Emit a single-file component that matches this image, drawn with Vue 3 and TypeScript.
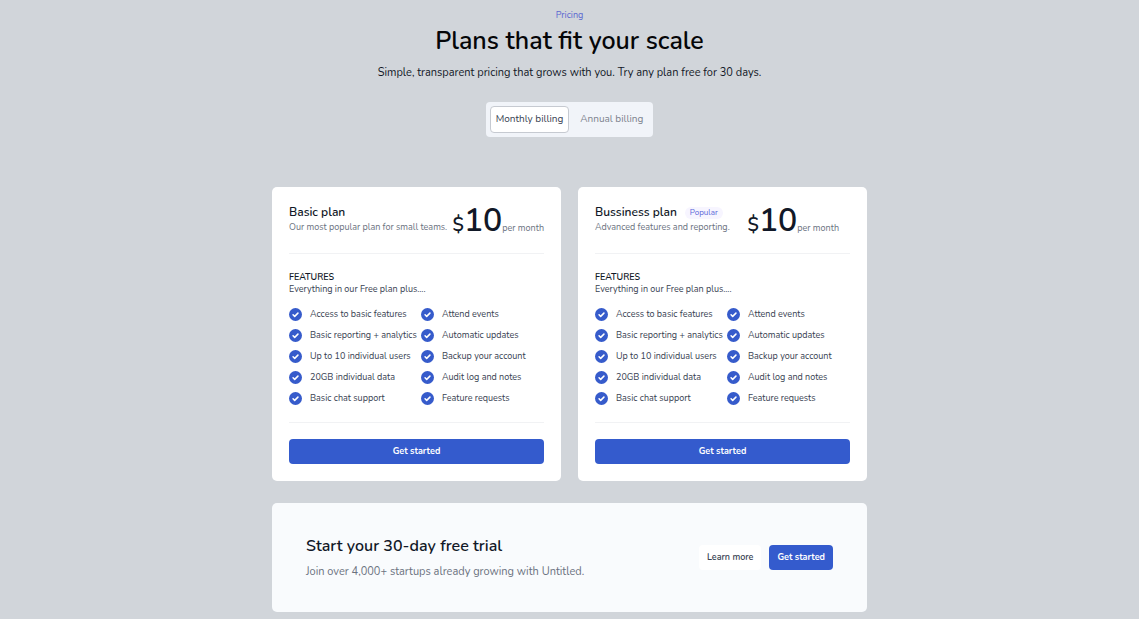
<script setup lang="ts">
import { ref } from 'vue'

type Billing = 'monthly' | 'annual'

interface Plan {
  name: string
  description: string
  price: number
  popular: boolean
}

const billing = ref<Billing>('monthly')

const billingOptions: { id: Billing; label: string }[] = [
  { id: 'monthly', label: 'Monthly billing' },
  { id: 'annual', label: 'Annual billing' },
]

const plans: Plan[] = [
  { name: 'Basic plan', description: 'Our most popular plan for small teams.', price: 10, popular: false },
  { name: 'Bussiness plan', description: 'Advanced features and reporting.', price: 10, popular: true },
]

const features: string[] = [
  'Access to basic features',
  'Attend events',
  'Basic reporting + analytics',
  'Automatic updates',
  'Up to 10 individual users',
  'Backup your account',
  '20GB individual data',
  'Audit log and notes',
  'Basic chat support',
  'Feature requests',
]
</script>

<template>
  <main class="page">
    <header class="intro">
      <p class="eyebrow">Pricing</p>
      <h1 class="title">Plans that fit your scale</h1>
      <p class="lead">Simple, transparent pricing that grows with you. Try any plan free for 30 days.</p>
      <div class="toggle" role="group" aria-label="Billing period">
        <button
          v-for="option in billingOptions"
          :key="option.id"
          type="button"
          class="toggle-option"
          :class="{ active: billing === option.id }"
          :aria-pressed="billing === option.id"
          @click="billing = option.id"
        >
          {{ option.label }}
        </button>
      </div>
    </header>

    <section class="plans" aria-label="Plans">
      <article v-for="plan in plans" :key="plan.name" class="card">
        <div class="card-head" :class="{ popular: plan.popular }">
          <div class="card-text">
            <div class="name-row">
              <h2 class="name">{{ plan.name }}</h2>
              <span v-if="plan.popular" class="badge">Popular</span>
            </div>
            <p class="description">{{ plan.description }}</p>
          </div>
          <p class="price">
            <span class="currency">$</span><span class="amount">{{ plan.price }}</span>
            <span class="period">per month</span>
          </p>
        </div>
        <hr class="divider" />
        <h3 class="features-title">FEATURES</h3>
        <p class="features-note">Everything in our Free plan plus....</p>
        <ul class="features">
          <li v-for="feature in features" :key="feature" class="feature">
            <svg class="check" viewBox="0 0 24 24" aria-hidden="true">
              <circle cx="12" cy="12" r="12" fill="#365bcb" />
              <path d="M7.5 12.5l3 3 6-6" fill="none" stroke="#fff" stroke-width="2.8" stroke-linecap="round" stroke-linejoin="round" />
            </svg>
            {{ feature }}
          </li>
        </ul>
        <hr class="divider" />
        <button type="button" class="button primary">Get started</button>
      </article>
    </section>

    <section class="trial">
      <div>
        <h2 class="trial-title">Start your 30-day free trial</h2>
        <p class="trial-text">Join over 4,000+ startups already growing with Untitled.</p>
      </div>
      <div class="trial-actions">
        <button type="button" class="button secondary">Learn more</button>
        <button type="button" class="button primary">Get started</button>
      </div>
    </section>
  </main>
</template>

<style>
body {
  background: #d1d5da;
}
</style>

<style scoped>
.page {
  box-sizing: border-box;
  max-width: 595px;
  margin: 0 auto;
  padding: 8px 0 7px;
  font-family: Nunito, Lato, "Open Sans", sans-serif;
  font-size: 9px;
  color: #111827;
}

h1, h2, h3, p, ul {
  margin: 0;
  padding: 0;
  font-weight: 400;
}

button {
  font: inherit;
  border: 0;
  cursor: pointer;
}

.intro {
  display: flex;
  flex-direction: column;
  align-items: center;
  text-align: center;
}

.eyebrow {
  line-height: 14px;
  color: #5a67d0;
}

.title {
  margin-top: 2px;
  font-size: 25px;
  font-weight: 600;
  line-height: 34px;
  color: #050608;
}

.lead {
  margin-top: 7px;
  font-size: 11px;
  line-height: 16px;
}

.toggle {
  display: flex;
  gap: 5px;
  margin-top: 21px;
  padding: 4px;
  border-radius: 4px;
  background: #f1f4f9;
}

.toggle-option {
  padding: 0 5px;
  border: 1px solid transparent;
  border-radius: 4px;
  background: transparent;
  font-size: 10px;
  line-height: 25px;
  color: #7b818c;
}

.toggle-option.active {
  border-color: #c6cad1;
  background: #fff;
  color: #374151;
}

.plans {
  display: grid;
  grid-template-columns: repeat(auto-fit, minmax(280px, 1fr));
  gap: 17px;
  margin-top: 50px;
}

.card {
  display: flex;
  flex-direction: column;
  padding: 17px;
  border-radius: 5px;
  background: #fff;
}

.card-head {
  display: flex;
  justify-content: space-between;
  height: 49px;
}

.card-head.popular {
  padding-right: 11px;
}

.name-row {
  display: flex;
  align-items: center;
  gap: 8px;
}

.name {
  font-size: 12px;
  font-weight: 600;
  line-height: 17px;
}

.badge {
  padding: 0 5px;
  border-radius: 8px;
  background: #f7f5ff;
  font-size: 8px;
  line-height: 12px;
  color: #5a67d8;
}

.description {
  line-height: 13px;
  color: #6b7280;
}

.price {
  line-height: 34px;
  white-space: nowrap;
}

.currency {
  font-size: 19px;
  font-weight: 600;
}

.amount {
  font-size: 32px;
  font-weight: 600;
}

.period {
  color: #6b7280;
}

.divider {
  width: 100%;
  margin: 0;
  border: 0;
  border-top: 1px solid #f1f2f4;
}

.features-title {
  margin-top: 17px;
  font-size: 9px;
  font-weight: 600;
  line-height: 12px;
}

.features-note {
  line-height: 13px;
  color: #374151;
}

.features {
  display: grid;
  grid-template-columns: repeat(2, minmax(0, 1fr));
  column-gap: 9px;
  margin: 8px 0 13px;
  list-style: none;
}

.feature {
  display: flex;
  align-items: center;
  gap: 8px;
  line-height: 21px;
  color: #374151;
  white-space: nowrap;
}

.check {
  flex: none;
  width: 13px;
  height: 13px;
}

.button {
  padding: 0 8px;
  border-radius: 4px;
  font-size: 9px;
  font-weight: 600;
  line-height: 25px;
}

.primary {
  background: #345bcd;
  color: #fff;
  font-weight: 700;
}

.secondary {
  background: #fff;
  color: #374151;
}

.card .button {
  margin-top: 16px;
}

.trial {
  display: flex;
  flex-wrap: wrap;
  align-items: center;
  justify-content: space-between;
  gap: 16px;
  margin-top: 22px;
  padding: 32px 34px;
  border-radius: 5px;
  background: #f9fbfd;
}

.trial-title {
  font-size: 16px;
  font-weight: 600;
  line-height: 22px;
}

.trial-text {
  margin-top: 7px;
  font-size: 11px;
  line-height: 16px;
  color: #6b7280;
}

.trial-actions {
  display: flex;
  gap: 8px;
}
</style>
